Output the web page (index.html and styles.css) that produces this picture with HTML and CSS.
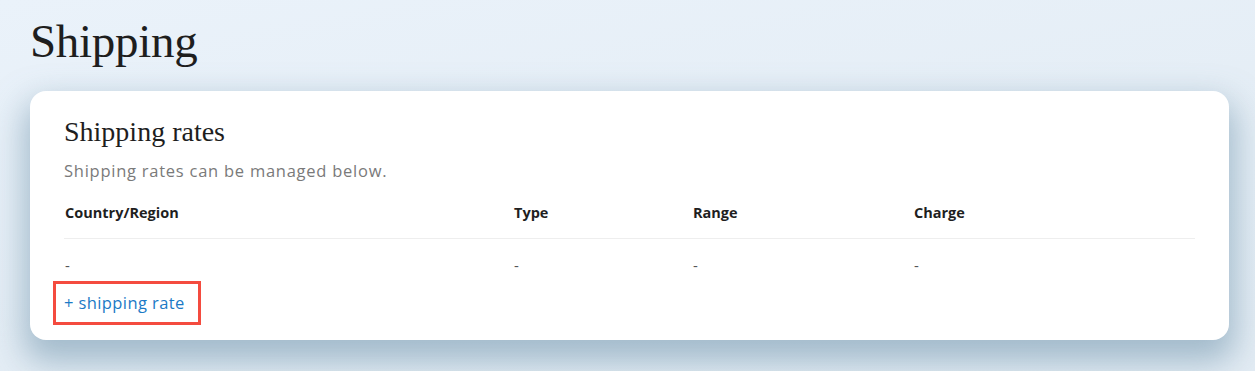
FILE: index.html
```html
<!DOCTYPE html>
<html lang="en">
<head>
  <meta charset="UTF-8">
  <title>Shipping</title>
  <link rel="stylesheet" href="styles.css">
</head>
<body>
  <h1 class="page-title">Shipping</h1>

  <div class="card">
    <h2 class="card-title">Shipping rates</h2>
    <p class="card-sub">Shipping rates can be managed below.</p>

    <div class="rates">
      <div class="rates-head">
        <span>Country/Region</span>
        <span>Type</span>
        <span>Range</span>
        <span>Charge</span>
      </div>
      <div class="rates-row">
        <span>-</span>
        <span>-</span>
        <span>-</span>
        <span>-</span>
      </div>
    </div>

    <div class="add-wrap">
      <a href="#" class="add-link">+ shipping rate</a>
    </div>
  </div>
</body>
</html>
```

FILE: styles.css
```css
body {
  margin: 0;
  padding: 0 26px 0 30px;
  font-family: 'Open Sans', 'Lato', sans-serif;
  background: linear-gradient(170deg, #eaf2fa 0%, #e4edf5 60%, #e3ecf4 100%);
  height: 371px;
  overflow: hidden;
}

.page-title {
  font-family: 'Liberation Serif', 'DejaVu Serif', serif;
  font-weight: normal;
  font-size: 47px;
  color: #1e1e1e;
  margin: 0;
  padding-top: 14px;
  height: 77px;
  letter-spacing: -0.3px;
}

.card {
  background: #fff;
  border-radius: 16px;
  padding: 24px 34px 16px 34px;
  box-shadow: 0 16px 32px 6px rgba(110, 145, 170, 0.55);
  height: 249px;
  box-sizing: border-box;
}

.card-title {
  font-family: 'Liberation Serif', 'DejaVu Serif', serif;
  font-weight: normal;
  font-size: 28px;
  color: #1e1e1e;
  margin: 0;
  line-height: 34px;
}

.card-sub {
  font-size: 16.5px;
  color: #7a7a7a;
  margin: 11px 0 0 0;
  line-height: 22px;
  letter-spacing: 0.75px;
}

.rates {
  margin-top: 11px;
}

.rates-head,
.rates-row {
  display: grid;
  grid-template-columns: 449px 179px 221px 1fr;
}

.rates-head {
  font-weight: bold;
  font-size: 14.5px;
  color: #1f1f1f;
  padding: 10px 0 16px 1px;
  border-bottom: 1px solid #eeeeee;
}

.rates-row {
  font-size: 15px;
  color: #555;
  padding: 16px 0 0 1px;
  height: 26px;
}

.add-wrap {
  margin: 0 0 0 -11px;
}

.add-link {
  display: inline-block;
  color: #1b7ac6;
  text-decoration: none;
  font-size: 16.5px;
  letter-spacing: 0.4px;
  border: 3px solid #f44b3f;
  padding: 7px 13px 8px 8px;
}
```
